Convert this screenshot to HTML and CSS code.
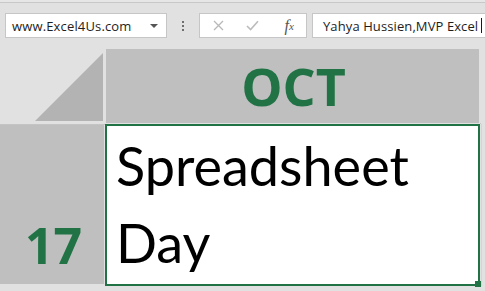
FILE: index.html
```html
<!DOCTYPE html>
<html>
<head>
<meta charset="utf-8">
<link rel="stylesheet" href="styles.css">
</head>
<body>
<div class="app">
  <div class="topline"></div>
  <div class="fbar">
    <div class="namebox">
      <span class="name-text">www.Excel4Us.com</span>
      <span class="caret"></span>
    </div>
    <div class="dots"><i></i><i></i><i></i></div>
    <div class="btns">
      <span class="btn cancel">
        <svg width="11" height="11" viewBox="0 0 11 11"><path d="M1 1 L10 10 M10 1 L1 10" fill="none" stroke="#b8b8b8" stroke-width="1.3"/></svg>
      </span>
      <span class="btn enter">
        <svg width="13" height="11" viewBox="0 0 13 11"><path d="M1 6 L4.6 9.5 L12 1.3" fill="none" stroke="#bcbcbc" stroke-width="1.6"/></svg>
      </span>
      <span class="btn fx">f<sub>x</sub></span>
    </div>
    <div class="finput">Yahya Hussien,MVP Excel<span class="cursor"></span></div>
  </div>
  <div class="sheet">
    <div class="corner"><div class="tri"></div></div>
    <div class="colhead">OCT</div>
    <div class="colrest"></div>
    <div class="rowhead">17</div>
    <div class="cell">
      <div class="cell-text">Spreadsheet<br>Day</div>
      <span class="handle"></span>
    </div>
    <div class="cellrest"></div>
  </div>
</div>
</body>
</html>
```
FILE: styles.css
```css
html, body { margin: 0; padding: 0; }
body { width: 485px; height: 291px; overflow: hidden; background: #e1e1e1; }
.app { width: 485px; height: 291px; overflow: hidden; background: #e1e1e1; font-family: "Open Sans", "DejaVu Sans", sans-serif; }
.topline { height: 2px; border-bottom: 1px solid #c8c8c8; background: #e6e6e6; }
.fbar { display: flex; align-items: stretch; height: 25px; margin-top: 10px; padding-left: 5px; }
.namebox { border: 1px solid #c6c6c6; background: #fff; display: flex; align-items: center; justify-content: space-between; padding: 0 8px 0 6px; box-sizing: border-box; width: 162px; }
.name-text { font-size: 13px; color: #1d1d1d; letter-spacing: 0.15px; }
.caret { width: 0; height: 0; border-left: 4px solid transparent; border-right: 4px solid transparent; border-top: 4px solid #555; margin-top: 1px; }
.dots { width: 32px; display: flex; flex-direction: column; align-items: center; justify-content: center; gap: 2px; }
.dots i { display: block; width: 2px; height: 2px; background: #6e6e6e; }
.btns { width: 108px; box-sizing: border-box; border: 1px solid #c6c6c6; background: #fff; display: flex; align-items: center; }
.btn { display: flex; align-items: center; justify-content: center; width: 36px; height: 100%; }
.cancel { padding-left: 2px; }
.fx { font-family: "Liberation Serif", serif; font-style: italic; font-size: 16px; color: #555; padding-left: 3px; }
.fx sub { font-size: 11px; vertical-align: -1px; }
.finput { flex: 1; margin-left: 5px; border: 1px solid #c6c6c6; border-right: none; background: #fff; display: flex; align-items: center; padding-left: 10px; font-size: 13px; color: #1d1d1d; white-space: nowrap; overflow: hidden; letter-spacing: 0.1px; }
.cursor { display: inline-block; width: 1px; height: 15px; background: #1a1a1a; margin-left: 3px; }
.sheet { display: grid; grid-template-columns: 105px 375px 5px; grid-template-rows: 75px 162px 5px; margin-top: 11px; }
.corner { border-bottom: 1px solid #c4c4c4; box-sizing: border-box; height: 76px; }
.tri { height: 68px; margin-left: 35px; width: 68px; background: #b3b3b3; clip-path: polygon(100% 0, 100% 100%, 0 100%); margin-top: 4px; }
.colhead { margin-left: 1px; margin-right: 1px; margin-bottom: 1px; background: #bfbfbf; color: #217346; font-family: "Open Sans", sans-serif; font-weight: 700; font-size: 52px; display: flex; align-items: center; justify-content: center; line-height: 1; padding-left: 2px; }
.colrest { border-left: 1px solid #c8c8c8; margin-top: 74px; }
.rowhead { margin-top: 1px; margin-right: 1px; margin-bottom: 2px; background: #bfbfbf; color: #217346; font-family: "Open Sans", sans-serif; font-weight: 700; font-size: 50px; line-height: 1; display: flex; align-items: flex-end; justify-content: center; padding-bottom: 14px; padding-left: 3px; box-sizing: border-box; }
.cell { position: relative; border: 2px solid #217346; background: #fff; display: flex; flex-direction: column; justify-content: flex-end; padding: 0 0 3px 9px; }
.cell-text { font-family: "Lato", "Open Sans", sans-serif; font-size: 54px; line-height: 77px; color: #000; }
.handle { position: absolute; right: -3px; bottom: -3px; width: 6px; height: 6px; background: #217346; }
.cellrest { border-left: 1px solid #d4d4d4; margin-left: 1px; }
```
